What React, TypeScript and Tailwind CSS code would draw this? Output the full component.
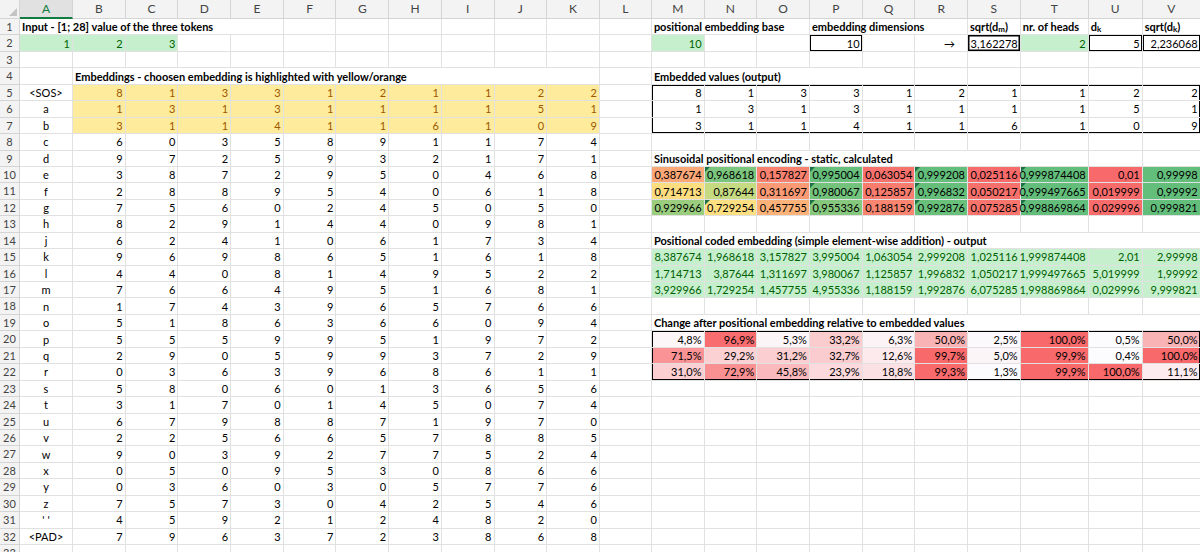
import React from "react";

type Cell = { c: React.ReactNode; span?: number; cls?: string; style?: React.CSSProperties; tri?: boolean };

const LETTERS = "ABCDEFGHIJKLMNOPQRSTUV".split("");

const embRows: [string, number[]][] = [
  ["<SOS>", [8, 1, 3, 3, 1, 2, 1, 1, 2, 2]],
  ["a", [1, 3, 1, 3, 1, 1, 1, 1, 5, 1]],
  ["b", [3, 1, 1, 4, 1, 1, 6, 1, 0, 9]],
  ["c", [6, 0, 3, 5, 8, 9, 1, 1, 7, 4]],
  ["d", [9, 7, 2, 5, 9, 3, 2, 1, 7, 1]],
  ["e", [3, 8, 7, 2, 9, 5, 0, 4, 6, 8]],
  ["f", [2, 8, 8, 9, 5, 4, 0, 6, 1, 8]],
  ["g", [7, 5, 6, 0, 2, 4, 5, 0, 5, 0]],
  ["h", [8, 2, 9, 1, 4, 4, 0, 9, 8, 1]],
  ["j", [6, 2, 4, 1, 0, 6, 1, 7, 3, 4]],
  ["k", [9, 6, 9, 8, 6, 5, 1, 6, 1, 8]],
  ["l", [4, 4, 0, 8, 1, 4, 9, 5, 2, 2]],
  ["m", [7, 6, 6, 4, 9, 5, 1, 6, 8, 1]],
  ["n", [1, 7, 4, 3, 9, 6, 5, 7, 6, 6]],
  ["o", [5, 1, 8, 6, 3, 6, 6, 0, 9, 4]],
  ["p", [5, 5, 5, 9, 9, 5, 1, 9, 7, 2]],
  ["q", [2, 9, 0, 5, 9, 9, 3, 7, 2, 9]],
  ["r", [0, 3, 6, 3, 9, 6, 8, 6, 1, 1]],
  ["s", [5, 8, 0, 6, 0, 1, 3, 6, 5, 6]],
  ["t", [3, 1, 7, 0, 1, 4, 5, 0, 7, 4]],
  ["u", [6, 7, 9, 8, 8, 7, 1, 9, 7, 0]],
  ["v", [2, 2, 5, 6, 6, 5, 7, 8, 8, 5]],
  ["w", [9, 0, 3, 9, 2, 7, 7, 5, 2, 4]],
  ["x", [0, 5, 0, 9, 5, 3, 0, 8, 6, 6]],
  ["y", [0, 3, 6, 0, 3, 0, 5, 7, 7, 6]],
  ["z", [7, 5, 7, 3, 0, 4, 2, 5, 4, 6]],
  ["' '", [4, 5, 9, 2, 1, 2, 4, 8, 2, 0]],
  ["<PAD>", [7, 9, 6, 3, 7, 2, 3, 8, 6, 8]],
];

const sinus = [
  ["0,387674", "0,968618", "0,157827", "0,995004", "0,063054", "0,999208", "0,025116", "0,999874408", "0,01", "0,99998"],
  ["0,714713", "0,87644", "0,311697", "0,980067", "0,125857", "0,996832", "0,050217", "0,999497665", "0,019999", "0,99992"],
  ["0,929966", "0,729254", "0,457755", "0,955336", "0,188159", "0,992876", "0,075285", "0,998869864", "0,029996", "0,999821"],
];
const coded = [
  ["8,387674", "1,968618", "3,157827", "3,995004", "1,063054", "2,999208", "1,025116", "1,999874408", "2,01", "2,99998"],
  ["1,714713", "3,87644", "1,311697", "3,980067", "1,125857", "1,996832", "1,050217", "1,999497665", "5,019999", "1,99992"],
  ["3,929966", "1,729254", "1,457755", "4,955336", "1,188159", "1,992876", "6,075285", "1,998869864", "0,029996", "9,999821"],
];
const change = [
  ["4,8%", "96,9%", "5,3%", "33,2%", "6,3%", "50,0%", "2,5%", "100,0%", "0,5%", "50,0%"],
  ["71,5%", "29,2%", "31,2%", "32,7%", "12,6%", "99,7%", "5,0%", "99,9%", "0,4%", "100,0%"],
  ["31,0%", "72,9%", "45,8%", "23,9%", "18,8%", "99,3%", "1,3%", "99,9%", "100,0%", "11,1%"],
];

const num = (s: string) => parseFloat(s.replace(",", "."));
const mix = (a: number[], b: number[], t: number) =>
  `rgb(${a.map((v, i) => Math.round(v + (b[i] - v) * t)).join(",")})`;
const RED = [248, 105, 107], YEL = [255, 235, 132], GRN = [99, 190, 123], WHT = [252, 252, 255];
function heat(v: number) {
  const min = 0.01, max = 0.99998, mid = 0.80285;
  if (v <= mid) return mix(RED, YEL, (v - min) / (mid - min));
  return mix(YEL, GRN, (v - mid) / (max - mid));
}
const whiteRed = (v: number) => mix(WHT, RED, Math.max(0, (v - 0.4) / 99.6));

const SH: Record<string, string> = {
  "": "",
  t: "shadow-[inset_0_1px_0_#000]",
  b: "shadow-[inset_0_-1px_0_#000]",
  l: "shadow-[inset_1px_0_0_#000]",
  r: "shadow-[inset_-1px_0_0_#000]",
  tl: "shadow-[inset_0_1px_0_#000,inset_1px_0_0_#000]",
  tr: "shadow-[inset_0_1px_0_#000,inset_-1px_0_0_#000]",
  bl: "shadow-[inset_0_-1px_0_#000,inset_1px_0_0_#000]",
  br: "shadow-[inset_0_-1px_0_#000,inset_-1px_0_0_#000]",
  tblr: "shadow-[inset_0_0_0_1px_#000]",
};
function boxEdge(r: number, c: number, r0: number, r1: number, c0: number, c1: number) {
  let k = "";
  if (r === r0) k += "t";
  if (r === r1) k += "b";
  if (c === c0) k += "l";
  if (c === c1) k += "r";
  return SH[k] ?? "";
}

const cells: Record<string, Cell> = {};
const set = (r: number, c: number, cell: Cell) => (cells[`${r},${c}`] = cell);

const T = "font-bold text-[11.5px]";
set(1, 0, { c: "Input - [1; 28] value of the three tokens", span: 5, cls: T });
set(4, 1, { c: "Embeddings - choosen embedding is highlighted with yellow/orange", span: 10, cls: T });
set(1, 12, { c: "positional embedding base", span: 3, cls: T });
set(1, 15, { c: "embedding dimensions", span: 3, cls: T });
set(1, 18, { c: <>sqrt(d<sub className="text-[8px]">m</sub>)</>, cls: T });
set(1, 19, { c: "nr. of heads", cls: T });
set(1, 20, { c: <>d<sub className="text-[8px]">k</sub></>, cls: T });
set(1, 21, { c: <>sqrt(d<sub className="text-[8px]">k</sub>)</>, cls: T });
set(4, 12, { c: "Embedded values (output)", span: 5, cls: T });
set(9, 12, { c: "Sinusoidal positional encoding - static, calculated", span: 8, cls: T });
set(14, 12, { c: "Positional coded embedding (simple element-wise addition) - output", span: 10, cls: T });
set(19, 12, { c: "Change after positional embedding relative to embedded values", span: 10, cls: T });

const GREEN = "bg-[#c6efce] text-[#006100] justify-end";
[1, 2, 3].forEach((v, i) => set(2, i, { c: v, cls: GREEN }));
set(2, 12, { c: "10", cls: GREEN });
set(2, 15, { c: "10", cls: "justify-end " + SH.tblr });
set(2, 17, { c: "→", cls: "justify-end pr-[12px]" });
set(2, 18, { c: "3,162278", cls: "justify-end shadow-[inset_0_0_0_1.5px_#000]" });
set(2, 19, { c: "2", cls: GREEN });
set(2, 20, { c: "5", cls: "justify-end " + SH.tblr });
set(2, 21, { c: "2,236068", cls: "justify-end " + SH.tblr });

embRows.forEach(([label, vals], i) => {
  const r = 5 + i;
  set(r, 0, { c: label, cls: "justify-center" });
  vals.forEach((v, j) =>
    set(r, 1 + j, { c: v, cls: "justify-end " + (i < 3 ? "bg-[#ffeb9c] text-[#9c5700]" : "") })
  );
  if (i < 3)
    vals.forEach((v, j) => set(r, 12 + j, { c: v, cls: "justify-end " + boxEdge(r, 12 + j, 5, 7, 12, 21) }));
});

sinus.forEach((row, i) =>
  row.forEach((s, j) =>
    set(10 + i, 12 + j, {
      c: s,
      cls: "justify-end",
      style: { background: heat(num(s)) },
      tri: j === 3 || j === 5 || j === 7 || (j === 1 && i !== 1),
    })
  )
);
coded.forEach((row, i) => row.forEach((s, j) => set(15 + i, 12 + j, { c: s, cls: GREEN })));
change.forEach((row, i) =>
  row.forEach((s, j) =>
    set(20 + i, 12 + j, {
      c: s,
      cls: "justify-end " + boxEdge(20 + i, 12 + j, 20, 22, 12, 21),
      style: { background: whiteRed(num(s)) },
    })
  )
);

export default function App() {
  const out: React.ReactNode[] = [];
  out.push(
    <div key="corner" className="relative bg-[#f3f3f3] border-r border-b border-[#d4d4d4]">
      <div className="absolute right-[2px] bottom-[2px] w-0 h-0 border-l-[8px] border-l-transparent border-b-[8px] border-b-[#c4c4c4]" />
    </div>
  );
  LETTERS.forEach((L, i) =>
    out.push(
      <div
        key={"h" + L}
        className={
          "flex items-center justify-center border-r border-b border-[#d4d4d4] text-[12px] " +
          (i === 0 ? "bg-[#e1e1e1] text-[#107c41] border-b-2 border-b-[#107c41]" : "bg-[#f3f3f3] text-[#444]")
        }
      >
        {L}
      </div>
    )
  );
  for (let r = 1; r <= 33; r++) {
    out.push(
      <div key={"r" + r} className="flex items-start pt-[2px] justify-center bg-[#f3f3f3] text-[#444] border-r border-b border-[#d4d4d4] text-[11px] overflow-hidden">
        {r}
      </div>
    );
    let c = 0;
    while (c < 22) {
      const cell = cells[`${r},${c}`];
      const span = cell?.span ?? 1;
      const spanCls =
        span === 3 ? "col-span-3" : span === 5 ? "col-span-5" : span === 8 ? "col-span-8" : span === 10 ? "col-span-10" : "";
      out.push(
        <div
          key={`${r}-${c}`}
          className={
            "relative flex items-center whitespace-nowrap overflow-visible px-[2px] border-r border-b border-[#e1e1e1] text-[11px] " +
            spanCls +
            " " +
            (cell?.cls ?? "")
          }
          style={cell?.style}
        >
          {cell?.tri && (
            <div className="absolute left-0 top-0 w-0 h-0 border-t-[5px] border-t-[#1e7145] border-r-[5px] border-r-transparent" />
          )}
          {cell?.c}
        </div>
      );
      c += span;
    }
  }
  return (
    <div className="w-[1200px] h-[552px] overflow-hidden bg-white">
      <div
        className="grid grid-cols-[20px_53px_repeat(10,52.7px)_52px_repeat(7,52.7px)_68px_54px_58px] grid-rows-[19px_repeat(33,16.45px)] text-black leading-none"
        style={{ fontFamily: "Lato, 'Open Sans', sans-serif" }}
      >
        {out}
      </div>
    </div>
  );
}
